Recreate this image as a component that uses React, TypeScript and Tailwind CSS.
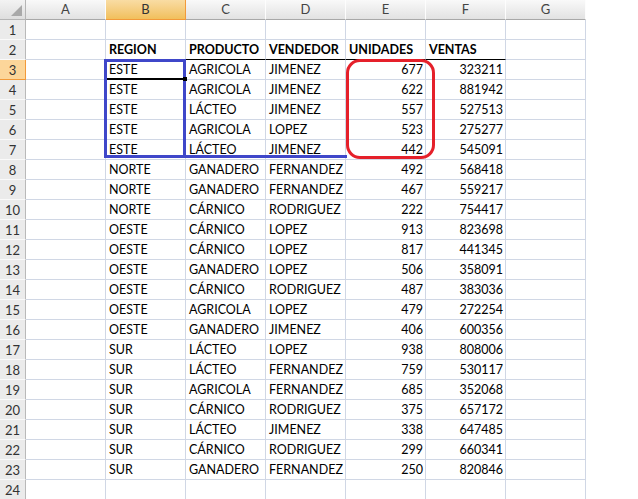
const cols = ["A", "B", "C", "D", "E", "F", "G"]

const data: [string, string, string, number, number][] = [
  ["ESTE", "AGRICOLA", "JIMENEZ", 677, 323211],
  ["ESTE", "AGRICOLA", "JIMENEZ", 622, 881942],
  ["ESTE", "LÁCTEO", "JIMENEZ", 557, 527513],
  ["ESTE", "AGRICOLA", "LOPEZ", 523, 275277],
  ["ESTE", "LÁCTEO", "JIMENEZ", 442, 545091],
  ["NORTE", "GANADERO", "FERNANDEZ", 492, 568418],
  ["NORTE", "GANADERO", "FERNANDEZ", 467, 559217],
  ["NORTE", "CÁRNICO", "RODRIGUEZ", 222, 754417],
  ["OESTE", "CÁRNICO", "LOPEZ", 913, 823698],
  ["OESTE", "CÁRNICO", "LOPEZ", 817, 441345],
  ["OESTE", "GANADERO", "LOPEZ", 506, 358091],
  ["OESTE", "CÁRNICO", "RODRIGUEZ", 487, 383036],
  ["OESTE", "AGRICOLA", "LOPEZ", 479, 272254],
  ["OESTE", "GANADERO", "JIMENEZ", 406, 600356],
  ["SUR", "LÁCTEO", "LOPEZ", 938, 808006],
  ["SUR", "LÁCTEO", "FERNANDEZ", 759, 530117],
  ["SUR", "AGRICOLA", "FERNANDEZ", 685, 352068],
  ["SUR", "CÁRNICO", "RODRIGUEZ", 375, 657172],
  ["SUR", "LÁCTEO", "JIMENEZ", 338, 647485],
  ["SUR", "CÁRNICO", "RODRIGUEZ", 299, 660341],
  ["SUR", "GANADERO", "FERNANDEZ", 250, 820846],
]

type Cell = { text: string; right?: boolean; bold?: boolean; under?: boolean }

function buildRow(r: number): Cell[] {
  const cells = cols.map(() => ({ text: "" }) as Cell)
  if (r === 2) {
    const heads = ["REGION", "PRODUCTO", "VENDEDOR", "UNIDADES", "VENTAS"]
    heads.forEach((h, i) => (cells[i + 1] = { text: h, bold: true, under: true }))
  }
  const d = data[r - 3]
  if (d) {
    cells[1] = { text: d[0] }
    cells[2] = { text: d[1] }
    cells[3] = { text: d[2] }
    cells[4] = { text: String(d[3]), right: true }
    cells[5] = { text: String(d[4]), right: true }
  }
  return cells
}

function RowHeader({ n }: { n: number }) {
  const active = n === 3
  return (
    <div
      className={
        "w-[26px] h-5 shrink-0 flex items-center justify-center text-[13px] leading-5 border-r border-b text-[#333] " +
        (active
          ? "bg-[#fcd69a] border-[#f29a3a]"
          : "bg-[#ebebeb] border-r-[#b9b9b9] border-b-[#fafafa]")
      }
    >
      {n}
    </div>
  )
}

export default function App() {
  const rows = Array.from({ length: 24 }, (_, i) => i + 1)
  return (
    <div className="w-[638px] h-[499px] overflow-hidden bg-white font-['Lato',sans-serif] text-black relative">
      {/* cabecera de columnas */}
      <div className="flex h-5">
        <div className="w-[26px] h-5 shrink-0 bg-gradient-to-b from-[#f3f3f3] to-[#dedede] border-r border-b border-[#b5b5b5] flex items-end justify-end p-[3px]">
          <div className="w-0 h-0 border-l-[11px] border-l-transparent border-b-[11px] border-b-[#a9a9a9]" />
        </div>
        {cols.map((c) => (
          <div
            key={c}
            className={
              "w-20 h-5 shrink-0 flex items-center justify-center text-[13px] border-r border-b " +
              (c === "B"
                ? "bg-gradient-to-b from-[#f9dca3] to-[#f1c05b] border-[#f29a3a] text-[#333]"
                : "bg-gradient-to-b from-[#f9f9f9] to-[#e2e2e2] border-r-[#fdfdfd] border-b-[#a8a8a8] text-[#444]")
            }
          >
            {c}
          </div>
        ))}
      </div>

      {rows.map((r) => (
        <div key={r} className="flex h-5">
          <RowHeader n={r} />
          {buildRow(r).map((cell, i) => (
            <div
              key={i}
              className={
                "w-20 h-5 shrink-0 border-r border-[#d0d7e5] text-[12.5px] leading-5 whitespace-nowrap overflow-hidden " +
                (cell.under ? "border-b border-b-black " : "border-b ") +
                (cell.right ? "text-right pr-[2px] " : "pl-[3px] ") +
                (cell.bold ? "font-bold" : "")
              }
            >
              {cell.text}
            </div>
          ))}
        </div>
      ))}

      {/* rango seleccionado en azul */}
      <div className="absolute left-[104px] top-[59px] w-[82px] h-[99px] border-[3px] border-[#3f47c9]" />
      <div className="absolute left-[185px] top-[155px] w-[162px] h-[3px] bg-[#3f47c9]" />

      {/* celda activa */}
      <div className="absolute left-[107px] top-[78px] w-[77px] h-[2px] bg-black" />
      <div className="absolute left-[183px] top-[77px] w-[4px] h-[4px] bg-black" />

      {/* círculo rojo */}
      <div className="absolute left-[346px] top-[59px] w-[89px] h-[100px] border-[3px] border-[#e5202a] rounded-[14px]" />
    </div>
  )
}
